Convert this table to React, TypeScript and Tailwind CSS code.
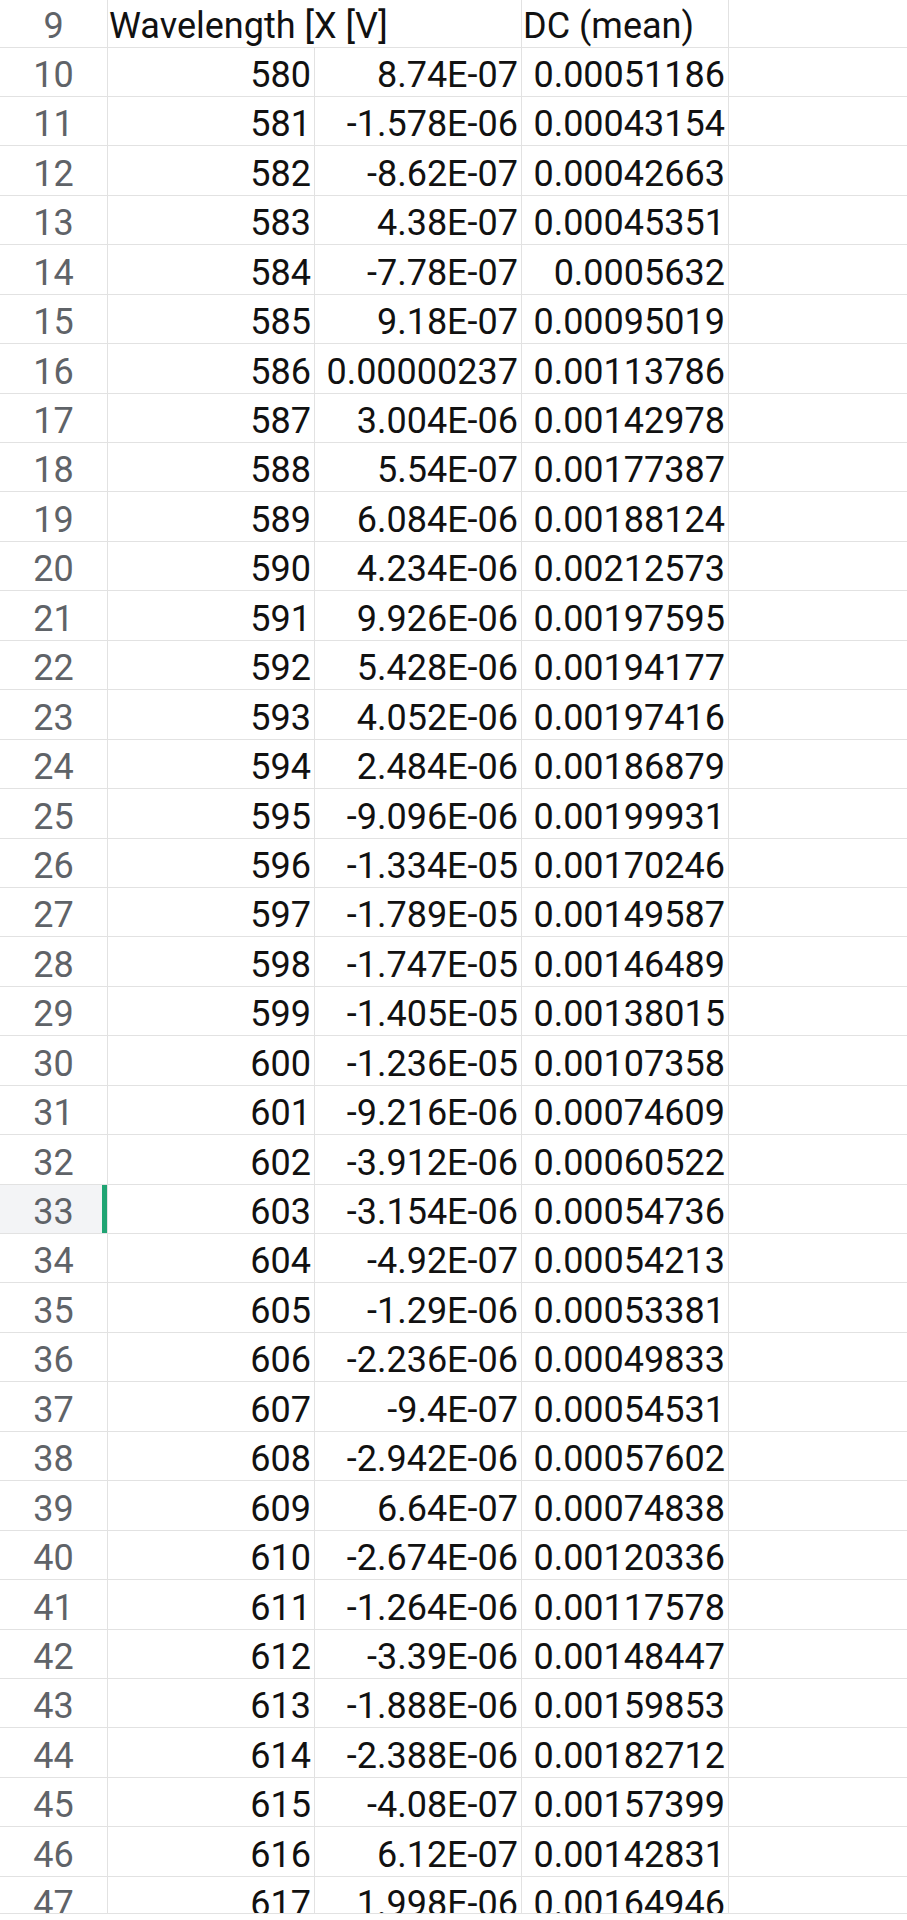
const rows: [number, string, string, string][] = [
  [10, '580', '8.74E-07', '0.00051186'],
  [11, '581', '-1.578E-06', '0.00043154'],
  [12, '582', '-8.62E-07', '0.00042663'],
  [13, '583', '4.38E-07', '0.00045351'],
  [14, '584', '-7.78E-07', '0.0005632'],
  [15, '585', '9.18E-07', '0.00095019'],
  [16, '586', '0.00000237', '0.00113786'],
  [17, '587', '3.004E-06', '0.00142978'],
  [18, '588', '5.54E-07', '0.00177387'],
  [19, '589', '6.084E-06', '0.00188124'],
  [20, '590', '4.234E-06', '0.00212573'],
  [21, '591', '9.926E-06', '0.00197595'],
  [22, '592', '5.428E-06', '0.00194177'],
  [23, '593', '4.052E-06', '0.00197416'],
  [24, '594', '2.484E-06', '0.00186879'],
  [25, '595', '-9.096E-06', '0.00199931'],
  [26, '596', '-1.334E-05', '0.00170246'],
  [27, '597', '-1.789E-05', '0.00149587'],
  [28, '598', '-1.747E-05', '0.00146489'],
  [29, '599', '-1.405E-05', '0.00138015'],
  [30, '600', '-1.236E-05', '0.00107358'],
  [31, '601', '-9.216E-06', '0.00074609'],
  [32, '602', '-3.912E-06', '0.00060522'],
  [33, '603', '-3.154E-06', '0.00054736'],
  [34, '604', '-4.92E-07', '0.00054213'],
  [35, '605', '-1.29E-06', '0.00053381'],
  [36, '606', '-2.236E-06', '0.00049833'],
  [37, '607', '-9.4E-07', '0.00054531'],
  [38, '608', '-2.942E-06', '0.00057602'],
  [39, '609', '6.64E-07', '0.00074838'],
  [40, '610', '-2.674E-06', '0.00120336'],
  [41, '611', '-1.264E-06', '0.00117578'],
  [42, '612', '-3.39E-06', '0.00148447'],
  [43, '613', '-1.888E-06', '0.00159853'],
  [44, '614', '-2.388E-06', '0.00182712'],
  [45, '615', '-4.08E-07', '0.00157399'],
  [46, '616', '6.12E-07', '0.00142831'],
  [47, '617', '1.998E-06', '0.00164946'],
];

const cell = 'flex shrink-0 items-end border-r border-[#e2e2e2] pb-[3px] leading-none whitespace-nowrap';

function Row({ n, a, b, c, active }: { n: number; a: string; b: string; c: string; active?: boolean }) {
  return (
    <div className="flex h-[49.45px] border-b border-[#e2e2e2]">
      <div
        className={`relative flex w-[108px] shrink-0 items-end justify-center border-r border-[#e2e2e2] pb-[3px] leading-none text-[#5f6368] ${
          active ? 'bg-[#f3f4f6]' : ''
        }`}
      >
        {n}
        {active ? <span className="absolute right-0 top-0 h-full w-[5px] bg-[#20a473]" /> : null}
      </div>
      <div className={`${cell} w-[207px] justify-end pr-[3px]`}>{a}</div>
      <div className={`${cell} w-[207px] justify-end pr-[3px]`}>{b}</div>
      <div className={`${cell} w-[207px] justify-end pr-[3px]`}>{c}</div>
      <div className={`${cell} w-[207px]`} />
    </div>
  );
}

export default function App() {
  return (
    <div className="h-[1920px] w-[907px] overflow-hidden bg-white font-['Roboto',sans-serif] text-[36px] text-[#111]">
      <div className="h-[1914px] overflow-hidden border-b border-[#e2e2e2]">
        <div className="flex h-[47.5px] border-b border-[#e2e2e2]">
          <div className="flex w-[108px] shrink-0 items-end justify-center border-r border-[#e2e2e2] pb-[3px] leading-none text-[#5f6368]">
            9
          </div>
          <div className="flex w-[207px] shrink-0 items-end pb-[3px] pl-[1px] leading-none whitespace-nowrap">
            Wavelength [X [V]
          </div>
          <div className={`${cell} w-[207px]`} />
          <div className={`${cell} w-[207px] pl-[1px]`}>DC (mean)</div>
          <div className={`${cell} w-[207px]`} />
        </div>
        {rows.map(([n, a, b, c]) => (
          <Row key={n} n={n} a={a} b={b} c={c} active={n === 33} />
        ))}
      </div>
    </div>
  );
}
